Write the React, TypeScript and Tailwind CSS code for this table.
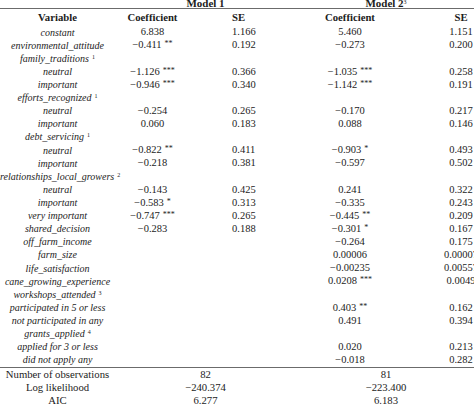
type Row = {
  name: string
  sup?: string
  c1?: string
  s1?: string
  c2?: string
  s2?: string
}

const rows: Row[] = [
  { name: "constant", c1: "6.838", s1: "1.166", c2: "5.460", s2: "1.151" },
  { name: "environmental_attitude", c1: "−0.411 **", s1: "0.192", c2: "−0.273", s2: "0.200" },
  { name: "family_traditions", sup: "1" },
  { name: "neutral", c1: "−1.126 ***", s1: "0.366", c2: "−1.035 ***", s2: "0.258" },
  { name: "important", c1: "−0.946 ***", s1: "0.340", c2: "−1.142 ***", s2: "0.191" },
  { name: "efforts_recognized", sup: "1" },
  { name: "neutral", c1: "−0.254", s1: "0.265", c2: "−0.170", s2: "0.217" },
  { name: "important", c1: "0.060", s1: "0.183", c2: "0.088", s2: "0.146" },
  { name: "debt_servicing", sup: "1" },
  { name: "neutral", c1: "−0.822 **", s1: "0.411", c2: "−0.903 *", s2: "0.493" },
  { name: "important", c1: "−0.218", s1: "0.381", c2: "−0.597", s2: "0.502" },
  { name: "relationships_local_growers", sup: "2" },
  { name: "neutral", c1: "−0.143", s1: "0.425", c2: "0.241", s2: "0.322" },
  { name: "important", c1: "−0.583 *", s1: "0.313", c2: "−0.335", s2: "0.243" },
  { name: "very important", c1: "−0.747 ***", s1: "0.265", c2: "−0.445 **", s2: "0.209" },
  { name: "shared_decision", c1: "−0.283", s1: "0.188", c2: "−0.301 *", s2: "0.167" },
  { name: "off_farm_income", c2: "−0.264", s2: "0.175" },
  { name: "farm_size", c2: "0.00006", s2: "0.00007" },
  { name: "life_satisfaction", c2: "−0.00235", s2: "0.00557" },
  { name: "cane_growing_experience", c2: "0.0208 ***", s2: "0.0049" },
  { name: "workshops_attended", sup: "3" },
  { name: "participated in 5 or less", c2: "0.403 **", s2: "0.162" },
  { name: "not participated in any", c2: "0.491", s2: "0.394" },
  { name: "grants_applied", sup: "4" },
  { name: "applied for 3 or less", c2: "0.020", s2: "0.213" },
  { name: "did not apply any", c2: "−0.018", s2: "0.282" },
]

const summary = [
  ["Number of observations", "82", "81"],
  ["Log likelihood", "−240.374", "−223.400"],
  ["AIC", "6.277", "6.183"],
]

// coefficient with small raised significance stars
function Coef({ v }: { v?: string }) {
  if (!v) return null
  const [num, stars] = v.split(" ")
  return (
    <>
      {num}
      {stars && <span className="ml-[3px] text-[8px] align-[2px]">{stars}</span>}
    </>
  )
}

const cols = "grid grid-cols-[115px_75px_106px_108px_114px]"

export default function App() {
  return (
    <div
      className="w-[474px] h-[406px] overflow-hidden bg-white text-[#1c1c1c]"
      style={{ fontFamily: '"Liberation Serif", "Times New Roman", serif' }}
    >
      <div className="w-[518px]">
        {/* model header, top of the text is cut by the crop */}
        <div className="grid grid-cols-[115px_181px_180px] h-[9px] border-b border-[#6b6b6b] text-[11px] font-bold">
          <div />
          <div className="text-center leading-[11px] -mt-[2px]">Model 1</div>
          <div className="text-center leading-[11px] -mt-[2px]">
            Model 2<sup className="text-[6px] font-normal">3</sup>
          </div>
        </div>

        {/* column header */}
        <div className={`${cols} h-[17px] items-center text-[10.7px] font-bold`}>
          <div className="text-center">Variable</div>
          <div className="text-center">Coefficient</div>
          <div className="pl-[42px]">SE</div>
          <div className="text-center">Coefficient</div>
          <div className="text-center">SE</div>
        </div>

        {/* data rows */}
        <div className="border-b border-[#6b6b6b]">
          {rows.map((r, i) => (
            <div key={i} className={`${cols} h-[13.12px] items-center text-[10.5px] leading-none`}>
              <div className="text-center italic text-[10px] whitespace-nowrap">
                {r.name}
                {r.sup && <sup className="ml-[3px] text-[6px] not-italic">{r.sup}</sup>}
              </div>
              <div className="text-center whitespace-nowrap">
                <Coef v={r.c1} />
              </div>
              <div className="pl-[42px]">{r.s1}</div>
              <div className="text-center whitespace-nowrap">
                <Coef v={r.c2} />
              </div>
              <div className="text-center">{r.s2}</div>
            </div>
          ))}
        </div>

        {/* summary rows */}
        {summary.map(([label, a, b]) => (
          <div key={label} className="grid grid-cols-[115px_181px_180px] h-[13px] items-center text-[10.7px] leading-none">
            <div className="text-center whitespace-nowrap">{label}</div>
            <div className="text-center">{a}</div>
            <div className="text-center">{b}</div>
          </div>
        ))}
      </div>
    </div>
  )
}
